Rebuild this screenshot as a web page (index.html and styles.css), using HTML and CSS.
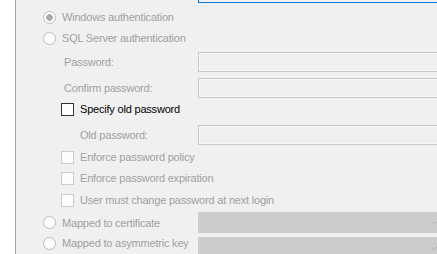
FILE: index.html
```html
<!DOCTYPE html>
<html>
<head>
<meta charset="utf-8">
<link rel="stylesheet" href="styles.css">
</head>
<body>
<div class="panel">
  <div class="row row-stub"><div class="field field-focus"></div></div>

  <div class="row opt r-win"><span class="radio checked"></span><span class="text dis">Windows authentication</span></div>
  <div class="row opt r-sql"><span class="radio"></span><span class="text dis">SQL Server authentication</span></div>

  <div class="row sub r-pwd"><span class="label dis">Password:</span><div class="field"></div></div>
  <div class="row sub r-conf"><span class="label dis">Confirm password:</span><div class="field"></div></div>

  <div class="row chk r-spec"><span class="check on"></span><span class="text">Specify old password</span></div>
  <div class="row sub2 r-old"><span class="label2 dis">Old password:</span><div class="field"></div></div>

  <div class="row chk r-pol"><span class="check"></span><span class="text dis">Enforce password policy</span></div>
  <div class="row chk r-exp"><span class="check"></span><span class="text dis">Enforce password expiration</span></div>
  <div class="row chk r-must"><span class="check"></span><span class="text dis">User must change password at next login</span></div>

  <div class="row opt combo-row r-cert"><span class="radio"></span><span class="text dis ctext">Mapped to certificate</span>
    <div class="combo"><svg class="chev" width="7" height="4" viewBox="0 0 7 4"><polyline points="0.5,0.5 3.5,3.5 6.5,0.5" fill="none" stroke="#b4b4b4" stroke-width="1"/></svg></div>
  </div>
  <div class="row opt combo-row r-asym"><span class="radio"></span><span class="text dis ctext">Mapped to asymmetric key</span>
    <div class="combo"><svg class="chev" width="7" height="4" viewBox="0 0 7 4"><polyline points="0.5,0.5 3.5,3.5 6.5,0.5" fill="none" stroke="#b4b4b4" stroke-width="1"/></svg></div>
  </div>
</div>
</body>
</html>
```
FILE: styles.css
```css
html, body {
  margin: 0;
  padding: 0;
  background: #ffffff;
  overflow: hidden;
}
body {
  font-family: "Liberation Sans", Arial, sans-serif;
  font-size: 11px;
  letter-spacing: -0.2px;
}
.panel {
  margin-left: 15px;
  border-left: 1px solid #a0a0a0;
  background: #f0f0f0;
  height: 254px;
  display: flex;
  flex-direction: column;
  overflow: hidden;
}
.row {
  display: flex;
  align-items: center;
  height: 20px;
  flex: none;
}
.dis { color: #a0a0a0; }
.text { white-space: nowrap; }

.row-stub {
  height: 3px;
  align-items: flex-start;
  padding-left: 182px;
}
.field {
  box-sizing: border-box;
  flex: 1;
  height: 20px;
  border: 1px solid #c8c8c8;
  border-right: none;
  background: #f0f0f0;
  box-shadow: inset 1px 1px 0 #f6f6f6, inset 0 -1px 0 #f6f6f6;
}
.field-focus {
  height: 3px;
  border: 1px solid #0078d7;
  border-top: none;
  border-right: none;
  box-shadow: none;
}

.opt { padding-left: 27px; }
.radio {
  box-sizing: border-box;
  width: 13px;
  height: 13px;
  border: 1px solid #bcbcbc;
  border-radius: 50%;
  background: #fcfcfc;
  margin-right: 6px;
  flex: none;
}
.radio.checked {
  background: radial-gradient(circle, #a8a8a8 0, #a8a8a8 3px, #fcfcfc 3.6px);
}

.sub { padding-left: 48px; }
.label { width: 134px; flex: none; white-space: nowrap; }
.sub2 { padding-left: 64px; }
.label2 { width: 118px; flex: none; white-space: nowrap; }

.chk { padding-left: 45px; }
.check {
  box-sizing: border-box;
  width: 13px;
  height: 13px;
  border: 1px solid #cccccc;
  background: #fcfcfc;
  margin-right: 6px;
  flex: none;
}
.check.on { border-color: #333333; background: #ffffff; }

.r-win { margin-top: 4px; }
.r-sql { margin-top: 1px; }
.r-pwd { margin-top: 4px; }
.r-conf { margin-top: 6px; }
.r-spec { margin-top: 1px; }
.r-old { margin-top: 6px; }
.r-pol { margin-top: 2px; }
.r-exp { margin-top: 1px; }
.r-must { margin-top: 2px; }

.combo-row { height: 21px; }
.ctext { width: 136px; flex: none; }
.r-cert { margin-top: 2px; }
.r-asym { margin-top: 4px; align-items: flex-start; }
.r-asym .ctext { line-height: 13px; }
.combo {
  box-sizing: border-box;
  flex: 1;
  height: 21px;
  background: #cccccc;
  display: flex;
  align-items: center;
  padding-left: 233px;
}
.chev { display: block; flex: none; }
```
